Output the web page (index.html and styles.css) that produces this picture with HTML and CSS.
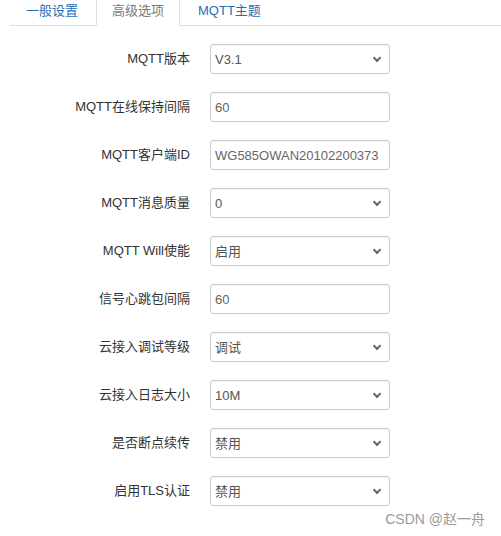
FILE: index.html
```html
<!DOCTYPE html>
<html lang="zh">
<head>
<meta charset="utf-8">
<title>高级选项</title>
<link rel="stylesheet" href="styles.css">
</head>
<body>
<ul class="tabs">
  <li class="tab"><a href="#">一般设置</a></li>
  <li class="tab active"><a href="#">高级选项</a></li>
  <li class="tab"><a href="#">MQTT主题</a></li>
</ul>
<div class="form">
  <div class="row"><label class="lbl">MQTT版本</label><div class="sel"><select class="ctl"><option>V3.1</option></select></div></div>
  <div class="row"><label class="lbl">MQTT在线保持间隔</label><input class="ctl" type="text" value="60"></div>
  <div class="row"><label class="lbl">MQTT客户端ID</label><input class="ctl" type="text" value="WG585OWAN20102200373"></div>
  <div class="row"><label class="lbl">MQTT消息质量</label><div class="sel"><select class="ctl"><option>0</option></select></div></div>
  <div class="row"><label class="lbl">MQTT Will使能</label><div class="sel"><select class="ctl"><option>启用</option></select></div></div>
  <div class="row"><label class="lbl">信号心跳包间隔</label><input class="ctl" type="text" value="60"></div>
  <div class="row"><label class="lbl">云接入调试等级</label><div class="sel"><select class="ctl"><option>调试</option></select></div></div>
  <div class="row"><label class="lbl">云接入日志大小</label><div class="sel"><select class="ctl"><option>10M</option></select></div></div>
  <div class="row"><label class="lbl">是否断点续传</label><div class="sel"><select class="ctl"><option>禁用</option></select></div></div>
  <div class="row"><label class="lbl">启用TLS认证</label><div class="sel"><select class="ctl"><option>禁用</option></select></div></div>
</div>
<div class="watermark">CSDN @赵一舟</div>
</body>
</html>
```
FILE: styles.css
```css
html, body {
  margin: 0;
  padding: 0;
  background: #fff;
}
body {
  position: relative;
  width: 501px;
  height: 536px;
  overflow: hidden;
  font-family: "Liberation Sans", Arial, "Noto Sans CJK SC", sans-serif;
  font-size: 13px;
  color: #333;
}
.tabs {
  list-style: none;
  margin: -10px 0 0 10px;
  padding: 0;
  display: flex;
  border-bottom: 1px solid #ddd;
}
.tab {
  margin-right: 2px;
  margin-bottom: -1px;
}
.tab a {
  display: block;
  padding: 10px 15px 4px;
  line-height: 20px;
  border: 1px solid transparent;
  border-bottom: 0;
  color: #1f6eb4;
  text-decoration: none;
}
.tab.active a {
  color: #7a7a7a;
  background: #fff;
  border-color: #ddd;
  border-bottom: 1px solid #fff;
}
.form {
  padding-top: 18px;
}
.row {
  display: flex;
  align-items: center;
  margin-bottom: 18px;
}
.lbl {
  width: 190px;
  box-sizing: border-box;
  text-align: right;
  margin-right: 20px;
  line-height: 18px;
  color: #333;
}
.ctl {
  width: 180px;
  height: 30px;
  box-sizing: border-box;
  margin: 0;
  padding: 0 4px;
  border: 1px solid #ccc;
  border-radius: 3px;
  background: #fff;
  color: #555;
  font-family: "Liberation Sans", Arial, "Noto Sans CJK SC", sans-serif;
  font-size: 13px;
  box-shadow: inset 0 1px 1px rgba(0,0,0,0.05);
  outline: none;
  -webkit-appearance: none;
  appearance: none;
}
input.ctl {
  color: #666;
}
.sel {
  position: relative;
  width: 180px;
  height: 30px;
}
.sel::after {
  content: "";
  position: absolute;
  right: 10px;
  top: 11px;
  width: 4px;
  height: 4px;
  border-right: 2px solid #666;
  border-bottom: 2px solid #666;
  transform: rotate(45deg);
  pointer-events: none;
}
.watermark {
  position: absolute;
  right: 16px;
  top: 510px;
  font-size: 14px;
  line-height: 18px;
  color: #9a9a9a;
}
```
